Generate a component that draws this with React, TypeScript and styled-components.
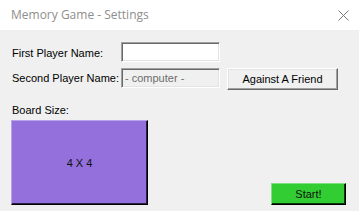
import React from 'react';
import styled, { createGlobalStyle } from 'styled-components';

const GlobalStyle = createGlobalStyle`
  html, body {
    margin: 0;
    padding: 0;
    background: #f0f0f0;
  }
  * {
    box-sizing: border-box;
  }
`;

const Window = styled.div`
  width: 359px;
  height: 211px;
  display: flex;
  flex-direction: column;
  overflow: hidden;
  font-family: 'Liberation Sans', Arial, sans-serif;
  font-size: 11px;
  color: #000;
`;

const TitleBar = styled.div`
  height: 30px;
  flex: none;
  background: #fff;
  display: flex;
  align-items: center;
  justify-content: space-between;
  padding: 0 10px 0 11px;
`;

const Title = styled.span`
  font-family: 'Open Sans', 'Noto Sans', sans-serif;
  font-size: 12px;
  color: #8e8e8e;
  margin-top: -1px;
`;

const Body = styled.div`
  flex: 1;
  background: #f0f0f0;
  padding: 12px 13px 6px 12px;
  display: flex;
  flex-direction: column;
`;

const Form = styled.div`
  display: grid;
  grid-template-columns: 109px 99px 118px;
  grid-template-rows: 20px 22px;
  row-gap: 6px;
`;

const Label = styled.label<{ $offset?: number }>`
  line-height: 13px;
  padding-top: ${(p) => p.$offset ?? 0}px;
  white-space: nowrap;
`;

const TextBox = styled.input`
  width: 99px;
  height: 20px;
  margin: 0;
  padding: 0 3px;
  font-family: 'Liberation Sans', Arial, sans-serif;
  font-size: 11px;
  color: #000;
  background: #fff;
  border-top: 1px solid #a0a0a0;
  border-left: 1px solid #a0a0a0;
  border-bottom: 1px solid #fff;
  border-right: 1px solid #fff;
  box-shadow: inset 1px 1px 0 #696969, inset -1px -1px 0 #e3e3e3;
  outline: none;

  &:disabled {
    background: #f0f0f0;
    color: #6d6d6d;
  }
`;

const ClassicButton = styled.button`
  height: 22px;
  margin: 0 0 0 7px;
  padding: 0;
  font-family: 'Liberation Sans', Arial, sans-serif;
  font-size: 11px;
  color: #000;
  background: #f0f0f0;
  border-top: 1px solid #fff;
  border-left: 1px solid #fff;
  border-bottom: 1px solid #696969;
  border-right: 1px solid #696969;
  box-shadow: inset -1px -1px 0 #a0a0a0, inset 1px 1px 0 #e3e3e3;
`;

const SectionLabel = styled.div`
  line-height: 13px;
  margin-top: 14px;
`;

const BottomRow = styled.div`
  margin-top: 3px;
  display: flex;
  justify-content: space-between;
  align-items: flex-end;
`;

const ColorButton = styled.button<{ $bg: string; $light: string; $dark: string; $w: number; $h: number }>`
  width: ${(p) => p.$w}px;
  height: ${(p) => p.$h}px;
  margin: 0;
  padding: 0;
  font-family: 'Liberation Sans', Arial, sans-serif;
  font-size: 11px;
  color: #111;
  background: ${(p) => p.$bg};
  border-top: 1px solid ${(p) => p.$light};
  border-left: 1px solid ${(p) => p.$light};
  border-bottom: 1px solid #000;
  border-right: 1px solid #000;
  box-shadow: inset -1px -1px 0 ${(p) => p.$dark};
`;

const BoardButton = styled(ColorButton)`
  margin-left: -1px;
`;

const CloseIcon = () => (
  <svg width="11" height="11" viewBox="0 0 11 11">
    <path d="M0.5 0.5 L10.5 10.5 M10.5 0.5 L0.5 10.5" stroke="#7a7a7a" strokeWidth="1" fill="none" />
  </svg>
);

export default function App() {
  return (
    <Window>
      <GlobalStyle />
      <TitleBar>
        <Title>Memory Game - Settings</Title>
        <CloseIcon />
      </TitleBar>
      <Body>
        <Form>
          <Label $offset={5}>First Player Name:</Label>
          <TextBox type="text" />
          <span />
          <Label $offset={4}>Second Player Name:</Label>
          <TextBox type="text" disabled value="- computer -" readOnly />
          <ClassicButton>Against A Friend</ClassicButton>
        </Form>
        <SectionLabel>Board Size:</SectionLabel>
        <BottomRow>
          <BoardButton $bg="#9370db" $light="#b8a2ea" $dark="#2a1f45" $w={137} $h={85}>
            4 X 4
          </BoardButton>
          <ColorButton $bg="#32cd32" $light="#7fe07f" $dark="#0d3a0d" $w={75} $h={22}>
            Start!
          </ColorButton>
        </BottomRow>
      </Body>
    </Window>
  );
}
